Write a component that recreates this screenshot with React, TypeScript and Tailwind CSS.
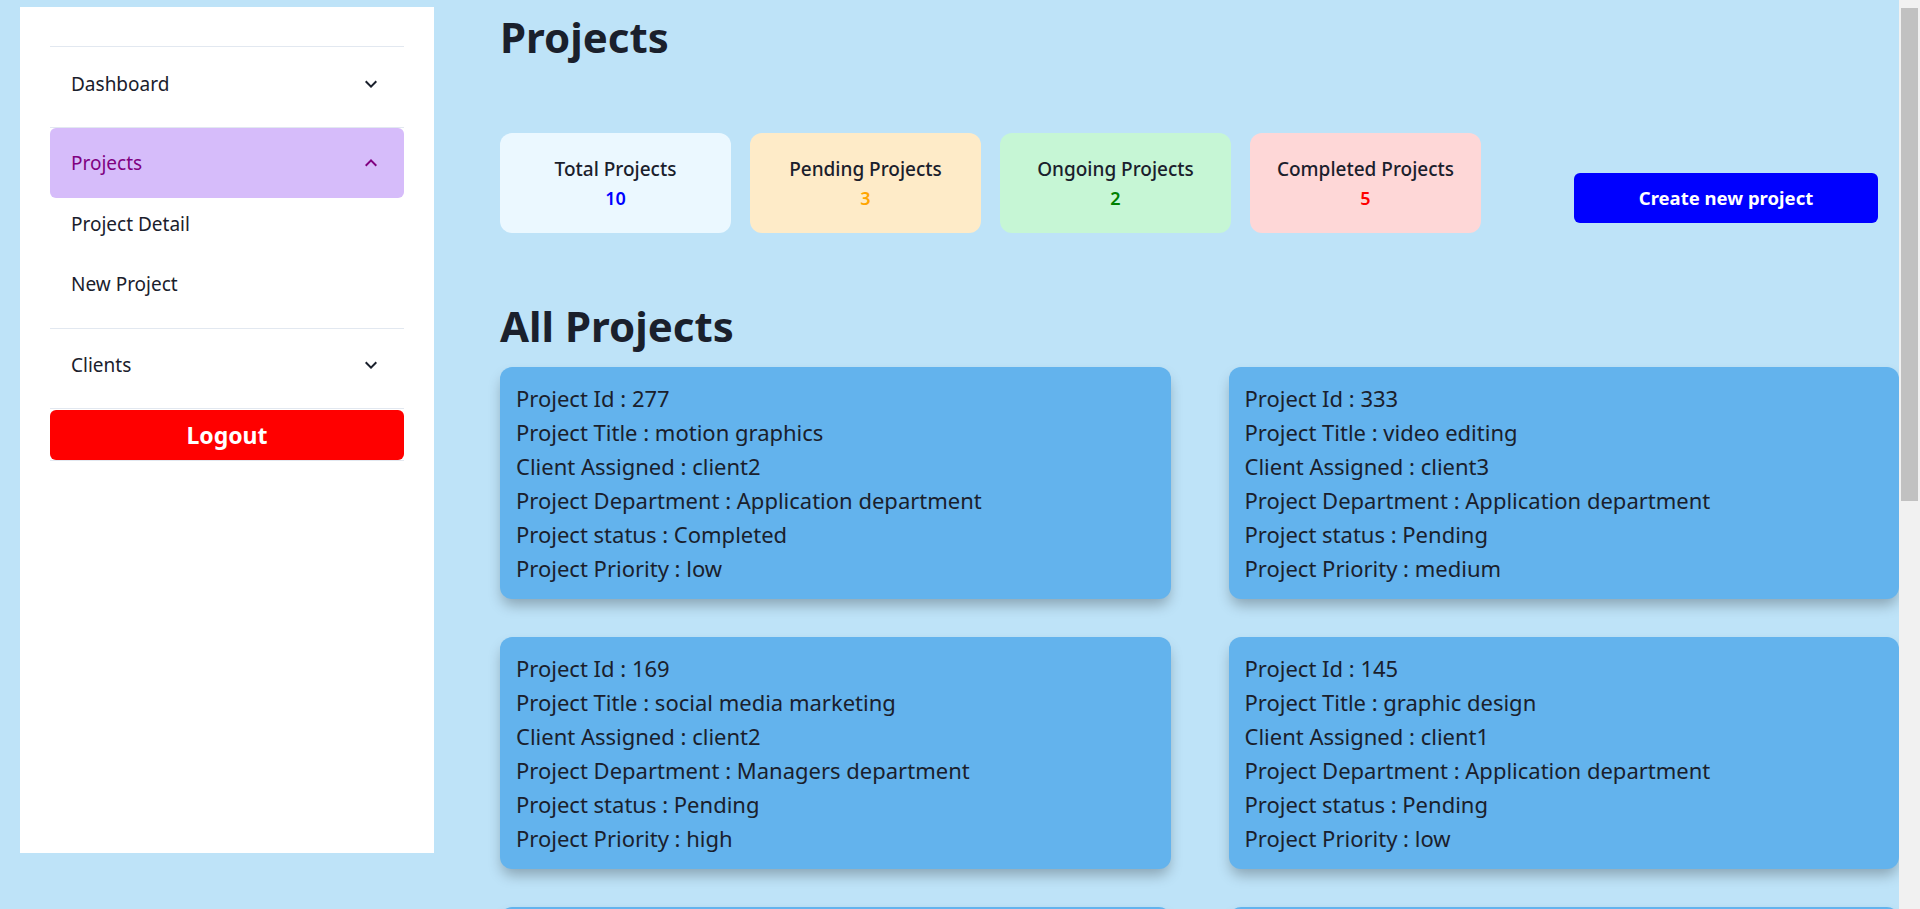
import React from 'react';

type Project = {
  id: number;
  title: string;
  client: string;
  department: string;
  status: string;
  priority: string;
};

const projects: Project[] = [
  { id: 277, title: 'motion graphics', client: 'client2', department: 'Application department', status: 'Completed', priority: 'low' },
  { id: 333, title: 'video editing', client: 'client3', department: 'Application department', status: 'Pending', priority: 'medium' },
  { id: 169, title: 'social media marketing', client: 'client2', department: 'Managers department', status: 'Pending', priority: 'high' },
  { id: 145, title: 'graphic design', client: 'client1', department: 'Application department', status: 'Pending', priority: 'low' },
];

const stats = [
  { label: 'Total Projects', value: 10, card: 'bg-[#EBF8FF]', text: 'text-[#0000FF]' },
  { label: 'Pending Projects', value: 3, card: 'bg-[#FEEBC8]', text: 'text-[#FFA500]' },
  { label: 'Ongoing Projects', value: 2, card: 'bg-[#C6F6D5]', text: 'text-[#008000]' },
  { label: 'Completed Projects', value: 5, card: 'bg-[#FED7D7]', text: 'text-[#FF0000]' },
];

const Chevron: React.FC<{ up?: boolean }> = ({ up }) => (
  <svg viewBox="0 0 24 24" width={24} height={24} fill="currentColor" aria-hidden>
    {up ? (
      <path d="M12 8l-6 6 1.41 1.41L12 10.83l4.59 4.58L18 14z" />
    ) : (
      <path d="M16.59 8.59L12 13.17 7.41 8.59 6 10l6 6 6-6z" />
    )}
  </svg>
);

const Sidebar: React.FC = () => (
  <aside className="w-[414px] h-[846px] mt-[7px] ml-[20px] shrink-0 bg-white px-[30px] pt-[39px]">
    <div className="border-t border-[#E2E8F0]">
      {/* Dashboard */}
      <button className="w-full flex items-center justify-between pl-[21px] pr-[21px] pt-[24px] pb-[30px] text-[19px] leading-[26px] text-[#1A202C]">
        <span>Dashboard</span>
        <Chevron />
      </button>
    </div>
    <div className="border-t border-[#E2E8F0]">
      {/* Projects (open) */}
      <button className="w-full flex items-center justify-between rounded-md bg-[#D6BCFA] pl-[21px] pr-[21px] pt-[22px] pb-[22px] text-[19px] leading-[26px] text-[#800080]">
        <span>Projects</span>
        <Chevron up />
      </button>
      <div className="flex flex-col gap-[24px] pl-[21px] pt-[8px] pb-[26px] text-[19px] text-[#1A202C]">
        <div className="h-[36px] flex items-center">Project Detail</div>
        <div className="h-[36px] flex items-center">New Project</div>
      </div>
    </div>
    <div className="border-t border-[#E2E8F0]">
      <button className="w-full flex items-center justify-between pl-[21px] pr-[21px] pt-[23px] pb-[30px] text-[19px] leading-[26px] text-[#1A202C]">
        <span>Clients</span>
        <Chevron />
      </button>
    </div>
    <div className="border-t border-b border-[#E2E8F0] pt-px">
      <button className="w-full h-[50px] rounded-md bg-[#FF0000] text-white text-[23px] font-bold">
        Logout
      </button>
    </div>
  </aside>
);

const cardBox =
  'rounded-xl bg-[#63B3ED] px-4 py-[14px] text-[22px] leading-[34px] text-[#1A202C] shadow-[0_8px_14px_-2px_rgba(0,0,0,0.28)]';

const ProjectCard: React.FC<{ p: Project }> = ({ p }) => (
  <div className={cardBox}>
    <p>Project Id : {p.id}</p>
    <p>Project Title : {p.title}</p>
    <p>Client Assigned : {p.client}</p>
    <p>Project Department : {p.department}</p>
    <p>Project status : {p.status}</p>
    <p>Project Priority : {p.priority}</p>
  </div>
);

export default function App() {
  return (
    <div className="flex h-[909px] overflow-hidden bg-[#BEE3F8] font-['Noto_Sans',sans-serif]">
      <Sidebar />

      <main className="flex-1 min-w-0 pl-[66px]">
        <h1 className="text-[42px] font-bold leading-[54px] text-[#1A202C] mt-[10px]">Projects</h1>

        <div className="flex items-start mt-[69px]">
          {stats.map((s) => (
            <div
              key={s.label}
              className={`w-[231px] h-[100px] mr-[19px] rounded-xl ${s.card} flex flex-col items-center justify-center pt-[2px]`}
            >
              <div className="text-[19px] font-medium text-[#1A202C] leading-[29px]">{s.label}</div>
              <div className={`text-[18px] font-semibold leading-[29px] ${s.text}`}>{s.value}</div>
            </div>
          ))}
          <button className="ml-[74px] mt-[40px] w-[304px] h-[50px] rounded-md bg-[#0000FF] text-white text-[18.5px] font-bold">
            Create new project
          </button>
        </div>

        <h2 className="text-[42px] font-bold leading-[54px] text-[#1A202C] mt-[66px]">All Projects</h2>

        <div className="grid grid-cols-2 gap-x-[58px] gap-y-[38px] mt-[14px]">
          {projects.map((p) => (
            <ProjectCard key={p.id} p={p} />
          ))}
          {/* next row, scrolled below the fold */}
          <div className={`${cardBox} h-[232px]`} />
          <div className={`${cardBox} h-[232px]`} />
        </div>
      </main>

      {/* browser scrollbar */}
      <div className="w-[21px] shrink-0 bg-[#F1F1F1] px-[2px] pt-[8px]">
        <div className="h-[493px] bg-[#C1C1C1]" />
      </div>
    </div>
  );
}
